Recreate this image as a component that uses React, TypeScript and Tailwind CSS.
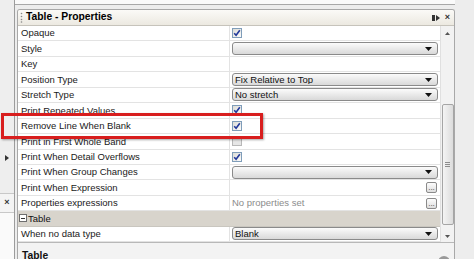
import React from "react";

const font = { fontFamily: '"Liberation Sans", Arial, sans-serif' };

function Check({ checked = true, disabled = false }: { checked?: boolean; disabled?: boolean }) {
  return (
    <div
      className={
        "w-[10px] h-[10px] border flex items-center justify-center " +
        (disabled ? "border-[#b8b8b8] bg-[#e6e6e6]" : "border-[#7f9db9] bg-gradient-to-br from-[#dcdcd6] to-[#fbfbfb]")
      }
    >
      {checked && (
        <svg width="8" height="8" viewBox="0 0 8 8">
          <path d="M1.2 4.2 L3.1 6.3 L6.8 1.3" fill="none" stroke="#21389a" strokeWidth="1.6" />
        </svg>
      )}
    </div>
  );
}

function Dropdown({ text }: { text?: string }) {
  return (
    <div className="h-[13px] flex-1 mr-[2px] rounded-[3px] border border-[#8a8a8a] bg-gradient-to-b from-[#fbfbfb] to-[#d9d9d9] flex items-center pl-[2px] pr-[5px] text-[9.5px] text-[#111] leading-none">
      <span className="flex-1 truncate">{text}</span>
      <svg width="7" height="4" viewBox="0 0 7 4">
        <path d="M0 0 H7 L3.5 4 Z" fill="#111" />
      </svg>
    </div>
  );
}

function Ellipsis() {
  return (
    <div className="ml-auto mr-[3px] w-[11px] h-[11px] rounded-[2px] border border-[#8a8a8a] bg-gradient-to-b from-[#fdfdfd] to-[#dedede] flex items-end justify-center text-[8px] leading-[8px] text-[#444]">
      ...
    </div>
  );
}

type Row = { label: string; value: React.ReactNode; cat?: boolean };

const rows: Row[] = [
  { label: "Opaque", value: <Check /> },
  { label: "Style", value: <Dropdown /> },
  { label: "Key", value: null },
  { label: "Position Type", value: <Dropdown text="Fix Relative to Top" /> },
  { label: "Stretch Type", value: <Dropdown text="No stretch" /> },
  { label: "Print Repeated Values", value: <Check /> },
  { label: "Remove Line When Blank", value: <Check /> },
  { label: "Print in First Whole Band", value: <Check checked={false} disabled /> },
  { label: "Print When Detail Overflows", value: <Check /> },
  { label: "Print When Group Changes", value: <Dropdown /> },
  { label: "Print When Expression", value: <Ellipsis /> },
  {
    label: "Properties expressions",
    value: (
      <>
        <span className="text-[#8c8c8c]">No properties set</span>
        <Ellipsis />
      </>
    ),
  },
  { label: "Table", value: null, cat: true },
  { label: "When no data type", value: <Dropdown text="Blank" /> },
];

export default function App() {
  return (
    <div className="w-[474px] h-[259px] bg-[#ededed] relative overflow-hidden flex text-[#111]" style={font}>
      {/* left strip */}
      <div className="w-[15px] h-full shrink-0 border-r border-[#9c9c9c] bg-[#eeeeee] flex flex-col">
        <div className="h-[151px] shrink-0" />
        <div className="h-[14px] shrink-0 flex items-center justify-center">
          <svg width="4" height="6" viewBox="0 0 4 6">
            <path d="M0 0 L4 3 L0 6 Z" fill="#333" />
          </svg>
        </div>
        <div className="h-[28px] shrink-0" />
        <div className="h-[20px] shrink-0 border-t border-b border-[#c8c8c8] bg-[#f4f4f4] flex items-center justify-center text-[9px] font-bold text-[#333]">
          ×
        </div>
        <div className="flex-1 bg-[#fafafa]" />
      </div>

      {/* main */}
      <div className="w-[440px] h-full shrink-0 flex flex-col">
        <div className="h-[5px] shrink-0 border-b border-[#a8a8a8] bg-[#fafafa]" />
        <div className="h-[4px] shrink-0" />
        <div className="ml-[2px] flex-1 min-h-0 overflow-hidden flex flex-col border-l border-r border-[#a8a8a8] rounded-t-[3px] border-t">
          {/* header */}
          <div className="h-[16px] shrink-0 bg-gradient-to-b from-[#fbfaf7] to-[#ece9e1] border-b border-[#c6c3bb] flex items-center pl-[2px] pr-[4px]">
            <svg width="3" height="11" viewBox="0 0 3 11" className="mr-[3px]">
              <circle cx="1.5" cy="1.5" r="0.8" fill="#888" />
              <circle cx="1.5" cy="4.5" r="0.8" fill="#888" />
              <circle cx="1.5" cy="7.5" r="0.8" fill="#888" />
              <circle cx="1.5" cy="10" r="0.8" fill="#888" />
            </svg>
            <span className="font-bold text-[10.3px] leading-none text-[#000]">Table - Properties</span>
            <div className="ml-auto flex items-center gap-[5px]">
              <svg width="8" height="8" viewBox="0 0 8 8">
                <rect x="0" y="1" width="3" height="6" fill="#333" />
                <path d="M4 1 L8 4 L4 7 Z" fill="#333" />
              </svg>
              <span className="text-[9px] font-bold leading-none text-[#333]">×</span>
            </div>
          </div>
          {/* body */}
          <div className="flex shrink-0">
            <div className="flex-1 flex flex-col bg-white">
              {rows.map((r) =>
                r.cat ? (
                  <div
                    key={r.label}
                    className="h-[15.45px] bg-[#d8d4cc] border-b border-[#c9c6bf] flex items-center pl-[1px] text-[9.5px] leading-none"
                  >
                    <span className="w-[8px] h-[8px] border border-[#6e6e6e] bg-white flex items-center justify-center mr-[1px]">
                      <span className="w-[4px] h-[1px] bg-[#333]" />
                    </span>
                    {r.label}
                  </div>
                ) : (
                  <div key={r.label} className="h-[15.45px] flex border-b border-[#e3e3e3] text-[9.5px] leading-none">
                    <div className="w-[212px] pl-[3px] flex items-center border-r border-[#e3e3e3] text-[#1a1a1a]">
                      {r.label}
                    </div>
                    <div className="flex-1 flex items-center pl-[2px]">{r.value}</div>
                  </div>
                )
              )}
            </div>
            {/* scrollbar */}
            <div className="w-[14px] bg-[#f2f2f2] border-l border-[#e0e0e0] flex flex-col items-center">
              <div className="h-[14px] shrink-0 flex items-center justify-center">
                <svg width="5" height="3" viewBox="0 0 5 3">
                  <path d="M0 3 L2.5 0 L5 3 Z" fill="#555" />
                </svg>
              </div>
              <div className="h-[64px] shrink-0" />
              <div className="w-[12px] h-[121px] shrink-0 rounded-[2px] border border-[#a5a5a5] bg-gradient-to-r from-[#f4f4f4] to-[#dcdcdc] flex items-center justify-center">
                <div className="flex flex-col gap-[1px]">
                  <div className="w-[5px] h-[1px] bg-[#8c8c8c]" />
                  <div className="w-[5px] h-[1px] bg-[#8c8c8c]" />
                  <div className="w-[5px] h-[1px] bg-[#8c8c8c]" />
                </div>
              </div>
              <div className="flex-1 flex items-end justify-center pb-[4px]">
                <svg width="5" height="3" viewBox="0 0 5 3">
                  <path d="M0 0 L2.5 3 L5 0 Z" fill="#555" />
                </svg>
              </div>
            </div>
          </div>
          {/* description */}
          <div className="flex-1 min-h-0 border-t border-[#b8b8b8] bg-[#f3f3f3] flex items-start pl-[4px] pt-[8px] pr-[4px]">
            <span className="font-bold text-[10.3px] leading-none">Table</span>
            <div className="ml-auto mt-[5px] w-[12px] h-[12px] shrink-0 rounded-full bg-[#9a9a9a]" />
          </div>
        </div>
      </div>
      <div className="flex-1 bg-[#ededed]" />

      {/* red highlight */}
      <div className="absolute left-[1px] top-[113px] w-[262px] h-[26px] border-[3px] border-[#d81e1e] shadow-[1px_1px_2px_rgba(0,0,0,0.35)]" />
    </div>
  );
}
